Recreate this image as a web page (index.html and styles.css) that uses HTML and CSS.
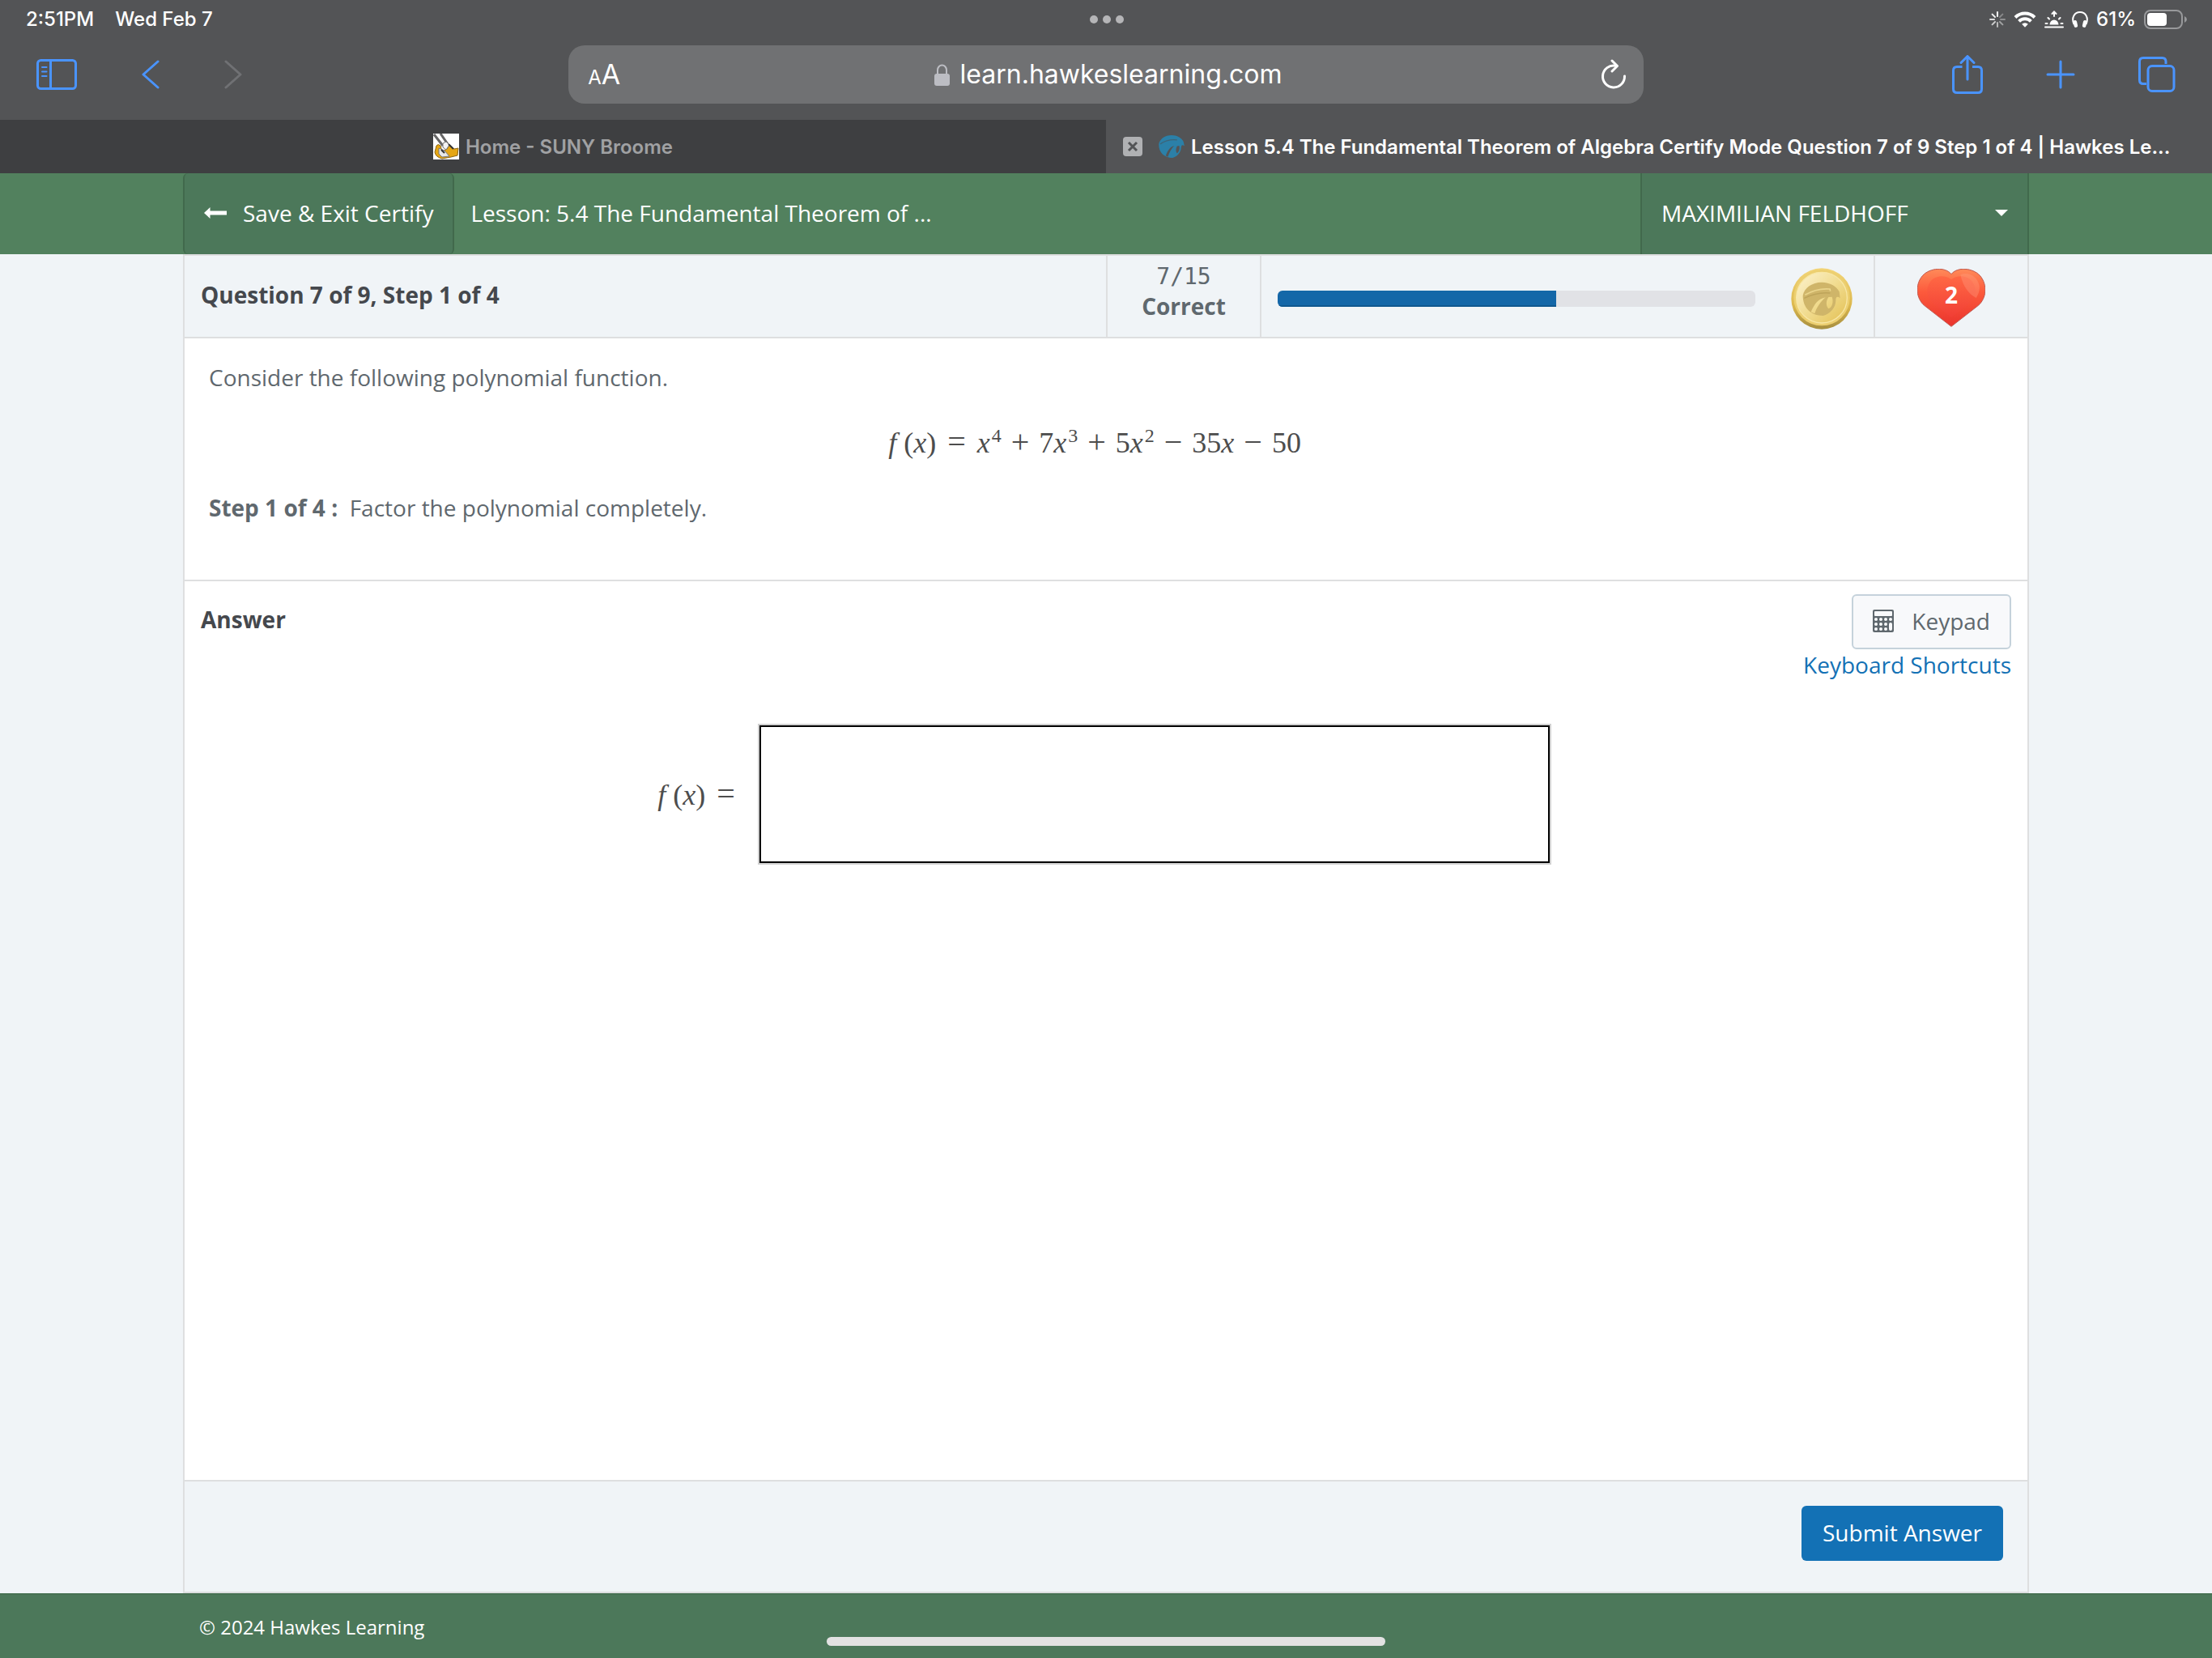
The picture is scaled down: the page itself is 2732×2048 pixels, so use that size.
FILE: index.html
```html
<!DOCTYPE html>
<html lang="en">
<head>
    <meta charset="UTF-8">
    <meta name="viewport" content="width=device-width, initial-scale=1.0">
    <title>Lesson 5.4 The Fundamental Theorem of Algebra</title>
    <link rel="stylesheet" href="styles.css">
</head>
<body>
    <div class="browser">
        <div class="status-bar">
            <div class="status-left">
                <span>2:51PM</span>
                <span>Wed Feb 7</span>
            </div>
            <svg class="dots" width="44" height="10" viewBox="0 0 44 10" fill="#b5b5b7">
                <circle cx="6" cy="5" r="5"/><circle cx="22" cy="5" r="5"/><circle cx="38" cy="5" r="5"/>
            </svg>
            <div class="status-right">
                <svg width="20" height="20" viewBox="0 0 20 20" stroke="#fff" stroke-width="2" stroke-linecap="round">
                    <path d="M10 1v5"/>
                    <path d="M16.4 3.6l-3.4 3.4" opacity=".3"/>
                    <path d="M19 10h-5" opacity=".35"/>
                    <path d="M16.4 16.4L13 13" opacity=".45"/>
                    <path d="M10 19v-5" opacity=".6"/>
                    <path d="M3.6 16.4L7 13" opacity=".7"/>
                    <path d="M1 10h5" opacity=".8"/>
                    <path d="M3.6 3.6L7 7" opacity=".9"/>
                </svg>
                <svg width="28" height="20" viewBox="0 0 28 20" fill="none" stroke="#fff" stroke-width="4">
                    <path d="M2 7.5a17 17 0 0 1 24 0"/>
                    <path d="M6.6 12.3a10.5 10.5 0 0 1 14.8 0"/>
                    <path d="M14 19.8l-3.8-4a5.4 5.4 0 0 1 7.6 0z" fill="#fff" stroke="none"/>
                </svg>
                <svg width="24" height="22" viewBox="0 0 24 22" fill="none" stroke="#fff" stroke-width="2" stroke-linecap="round">
                    <path d="M1 20.5h22M12 7V2M9.5 4L12 1.500 14.500 4M1.500 16h2M20.500 16h2M4.500 9l1.500 1.500M19.500 9L18 10.500"/>
                    <path d="M6.500 17.500a5.500 6 0 0 1 11 0z" fill="#fff" stroke="none"/>
                </svg>
                <svg width="20" height="20" viewBox="0 0 20 20" fill="none" stroke="#fff" stroke-width="2">
                    <path d="M2.500 16C-1 8 3 1 10 1s11 7 7.500 15"/>
                    <rect x="2" y="11" width="4.500" height="9" rx="2.200" fill="#fff" stroke="none" transform="rotate(-12 4 15)"/>
                    <rect x="13.500" y="11" width="4.500" height="9" rx="2.200" fill="#fff" stroke="none" transform="rotate(12 16 15)"/>
                </svg>
                <span>61%</span>
                <svg width="54" height="24" viewBox="0 0 54 24">
                    <rect x="1" y="1" width="46" height="22" rx="7" fill="none" stroke="#98999b" stroke-width="2"/>
                    <rect x="4" y="4" width="24" height="16" rx="4" fill="#fff"/>
                    <path d="M50 8q3 1.500 3 4t-3 4z" fill="#98999b"/>
                </svg>
            </div>
        </div>

        <div class="toolbar">
            <div class="tools-left">
                <button type="button" aria-label="Show sidebar">
                    <svg width="50" height="38" viewBox="0 0 50 38" fill="none" stroke="#4a94ff" stroke-width="3">
                        <rect x="1.500" y="1.500" width="47" height="35" rx="4"/>
                        <path d="M17.500 2v34"/>
                        <path d="M7 10h5.500M7 15.500h5.500M7 21h5.500" stroke-width="2" stroke-linecap="round"/>
                    </svg>
                </button>
                <button type="button" aria-label="Back">
                    <svg width="22" height="38" viewBox="0 0 22 38" fill="none" stroke="#4a94ff" stroke-width="3" stroke-linecap="round" stroke-linejoin="round">
                        <path d="M20 3L2 19l18 16"/>
                    </svg>
                </button>
                <button type="button" aria-label="Forward" disabled>
                    <svg width="22" height="38" viewBox="0 0 22 38" fill="none" stroke="#707174" stroke-width="3" stroke-linecap="round" stroke-linejoin="round">
                        <path d="M2 3l18 16L2 35"/>
                    </svg>
                </button>
            </div>
            <div class="address">
                <button type="button" class="text-size" aria-label="Page settings"><small>A</small>A</button>
                <div class="url">
                    <svg width="19" height="27" viewBox="0 0 19 27">
                        <path d="M4 13V7.500a5.500 6 0 0 1 11 0V13" fill="none" stroke="#bcbdc3" stroke-width="2"/>
                        <rect x="0" y="12" width="19" height="15" rx="3" fill="#bcbdc3"/>
                    </svg>
                    <input type="text" value="learn.hawkeslearning.com" aria-label="Address">
                </div>
                <button type="button" aria-label="Reload">
                    <svg width="32" height="38" viewBox="0 0 32 38" fill="none" stroke="#fff" stroke-width="3" stroke-linecap="round" stroke-linejoin="round">
                        <path d="M18.500 8.200A13.500 13.500 0 1 0 29.500 21"/>
                        <path d="M14 2l6.500 6.500L14 15"/>
                    </svg>
                </button>
            </div>
            <div class="tools-right">
                <button type="button" aria-label="Share">
                    <svg width="38" height="48" viewBox="0 0 38 48" fill="none" stroke="#4a94ff" stroke-width="3" stroke-linecap="round" stroke-linejoin="round">
                        <path d="M12.500 14.500H6q-4.500 0-4.500 4.500v23q0 4.500 4.500 4.500h26q4.500 0 4.500-4.500V19q0-4.500-4.500-4.500h-7" stroke-linecap="butt"/>
                        <path d="M19 30V2M11 9.500L19 1.500l8 8"/>
                    </svg>
                </button>
                <button type="button" aria-label="New tab">
                    <svg width="36" height="36" viewBox="0 0 36 36" stroke="#4a94ff" stroke-width="3" stroke-linecap="round">
                        <path d="M18 2v32M2 18h32"/>
                    </svg>
                </button>
                <button type="button" aria-label="Show tabs">
                    <svg width="46" height="44" viewBox="0 0 46 44" fill="none" stroke="#4a94ff" stroke-width="3">
                        <rect x="12" y="11.500" width="32" height="31" rx="5"/>
                        <path d="M34 9V6q0-4.500-4.500-4.500H6Q1.500 1.500 1.500 6v23q0 4.500 4.500 4.500h4"/>
                    </svg>
                </button>
            </div>
        </div>

        <div class="tabs">
            <div class="tab">
                <svg width="32" height="32" viewBox="0 0 32 32">
                    <rect width="32" height="32" fill="#fff"/>
                    <path d="M1 1l11 14M9 0l9 13" fill="none" stroke="#666" stroke-width="3"/>
                    <path d="M4 15q2-3 5 0l2 7 6-3 3-5 6 5 5-1-1 9-8 2-11 2q-8-2-9-8z" fill="#e5a614" stroke="#8a6414"/>
                    <path d="M7 18l7 3 6 7-9 1-4-4z" fill="#e8e8e8" stroke="#777"/>
                    <path d="M12 12l4-2 4 4-4 6-4-3z" fill="#f4f4f4" stroke="#777"/>
                    <path d="M10 20l4 4M19 13l6 6" fill="none" stroke="#333" stroke-width="2"/>
                </svg>
                <span>Home - SUNY Broome</span>
            </div>
            <div class="tab active">
                <button type="button" class="close" aria-label="Close tab">
                    <svg width="24" height="24" viewBox="0 0 24 24">
                        <rect width="24" height="24" rx="4" fill="#b0b1b3"/>
                        <path d="M7 7l10 10M17 7L7 17" stroke="#535456" stroke-width="3"/>
                    </svg>
                </button>
                <svg class="hawk" width="32" height="28" viewBox="0 0 140 124">
                    <path fill="#2b80a8" fill-rule="evenodd" d="M0 50C5 20 35 0 70 0c30 0 55 15 65 35l5 24c-12-9-16-4-18 9 0 27-22 50-47 56C30 124 0 95 0 50zM38 112l12 6c8-25 20-45 34-60-22 6-35 26-46 54zM100 60c-8 15-8 30 0 40 12-11 16-26 12-42z"/>
                    <path d="M8 48Q50 20 100 26" fill="none" stroke="#3d6478" stroke-width="6"/>
                </svg>
                <span>Lesson 5.4 The Fundamental Theorem of Algebra Certify Mode Question 7 of 9 Step 1 of 4 | Hawkes Le...</span>
            </div>
        </div>
    </div>

    <header class="header">
        <div class="container header-inner">
            <a href="#" class="exit">
                <svg width="28" height="16" viewBox="0 0 28 16" fill="#fff"><path d="M0 8l7.500-7v4.500H28v5H7.500V15z"/></svg>
                Save &amp; Exit Certify
            </a>
            <span class="lesson">Lesson: 5.4 The Fundamental Theorem of ...</span>
            <button type="button" class="user" aria-haspopup="menu">
                MAXIMILIAN FELDHOFF
                <svg width="16" height="8" viewBox="0 0 16 8" fill="#fff"><path d="M0 0h16L8 8z"/></svg>
            </button>
        </div>
    </header>

    <main class="container main">
        <div class="info">
            <h1>Question 7 of 9, Step 1 of 4</h1>
            <div class="score">
                <span class="count">7/15</span>
                <strong>Correct</strong>
            </div>
            <div class="mastery">
                <progress max="12" value="7" aria-label="Mastery progress"></progress>
                <svg width="76" height="76" viewBox="0 0 228 228">
                    <defs>
                        <linearGradient id="rim" x1="0" y1="0" x2="0" y2="1">
                            <stop offset="0" stop-color="#f3d578"/>
                            <stop offset=".6" stop-color="#ddb94f"/>
                            <stop offset="1" stop-color="#a68e3f"/>
                        </linearGradient>
                        <linearGradient id="face" x1="0" y1="0" x2="1" y2="1">
                            <stop offset="0" stop-color="#fdf3d0"/>
                            <stop offset=".5" stop-color="#f1dc90"/>
                            <stop offset="1" stop-color="#e3c052"/>
                        </linearGradient>
                    </defs>
                    <circle cx="114" cy="114" r="113" fill="url(#rim)"/>
                    <circle cx="114" cy="110" r="104" fill="#eccf70"/>
                    <circle cx="114" cy="110" r="94" fill="url(#face)" stroke="#f8e7a6" stroke-width="4"/>
                    <path transform="translate(44 53)" fill="#cfb569" fill-rule="evenodd" d="M0 50C5 20 35 0 70 0c30 0 55 15 65 35l3 24c-12-9-16-4-16 9 0 27-22 50-47 56C30 124 0 95 0 50zM30 110l14 6c8-25 22-44 40-60-28 6-41 25-54 54zM95 55c-10 15-10 32 0 43 15-6 19-26 13-44z"/>
                    <path d="M52 100q44-26 92-22l2 8" fill="none" stroke="#ead58c" stroke-width="5"/>
                    <path d="M49 112q48-24 96-19" fill="none" stroke="#bea45a" stroke-width="4"/>
                </svg>
            </div>
            <div class="lives">
                <svg width="84" height="72" viewBox="0 0 252 216">
                    <defs>
                        <linearGradient id="heart" x1="0" y1="0" x2="0" y2="1">
                            <stop offset="0" stop-color="#ff8a59"/>
                            <stop offset=".4" stop-color="#fc5a3c"/>
                            <stop offset="1" stop-color="#ea332d"/>
                        </linearGradient>
                        <linearGradient id="heart-in" x1="0" y1="0" x2="0" y2="1">
                            <stop offset="0" stop-color="#ff6844"/>
                            <stop offset="1" stop-color="#f13e35"/>
                        </linearGradient>
                    </defs>
                    <path d="M126 20C148-8 205-4 232 25c30 35 24 85-6 111l-100 78L26 136C-4 110-10 60 20 25 47-4 104-8 126 20z" fill="url(#heart)" stroke="#c05a50" stroke-width="3"/>
                    <path d="M126 40c22-18 60-16 78 8 18 26 14 56-6 76l-72 56-72-56c-20-20-24-50-6-76 18-24 56-26 78-8z" fill="url(#heart-in)"/>
                    <path d="M160 22c30-12 62 6 70 40 2 18-4 34-12 46-26-12-50-44-58-86z" fill="#ffa183" opacity=".35"/>
                </svg>
                <span>2</span>
            </div>
        </div>

        <section class="question">
            <p>Consider the following polynomial function.</p>
            <p class="formula">
                <span><i>f</i> (<i>x</i>)</span>
                <span class="op equals">=</span>
                <span><i>x</i><sup>4</sup></span>
                <span class="op">+</span>
                <span>7<i>x</i><sup>3</sup></span>
                <span class="op">+</span>
                <span>5<i>x</i><sup>2</sup></span>
                <span class="op">−</span>
                <span>35<i>x</i></span>
                <span class="op">−</span>
                <span>50</span>
            </p>
            <p><strong>Step 1 of 4 :</strong>&nbsp; Factor the polynomial completely.</p>
        </section>

        <form id="answerForm" class="answer">
            <div class="answer-head">
                <h2>Answer</h2>
                <div class="helpers">
                    <button type="button" class="keypad">
                        <svg width="26" height="28" viewBox="0 0 26 28">
                            <rect width="26" height="28" rx="2" fill="#5f686e"/>
                            <g fill="#f8f9fb">
                                <rect x="2" y="2" width="22" height="6" rx="1"/>
                                <circle cx="4" cy="12" r="2"/><circle cx="10" cy="12" r="2"/><circle cx="16" cy="12" r="2"/><circle cx="22" cy="12" r="2"/>
                                <circle cx="4" cy="18" r="2"/><circle cx="10" cy="18" r="2"/><circle cx="16" cy="18" r="2"/>
                                <circle cx="4" cy="24" r="2"/><circle cx="10" cy="24" r="2"/><circle cx="16" cy="24" r="2"/>
                                <rect x="20" y="16" width="4" height="10" rx="2"/>
                            </g>
                        </svg>
                        Keypad
                    </button>
                    <a href="#">Keyboard Shortcuts</a>
                </div>
            </div>
            <div class="answer-row">
                <label for="answer" class="formula">
                    <span><i>f</i> (<i>x</i>)</span>
                    <span class="op equals">=</span>
                </label>
                <input type="text" id="answer" name="answer">
            </div>
        </form>

        <div class="actions">
            <button type="submit" form="answerForm" class="submit">Submit Answer</button>
        </div>
    </main>

    <footer class="footer">
        <div class="container">© 2024 Hawkes Learning</div>
        <div class="home-indicator"></div>
    </footer>
</body>
</html>
```

FILE: styles.css
```css
* {
    box-sizing: border-box;
}
body {
    margin: 0;
    min-height: 100vh;
    display: flex;
    flex-direction: column;
    background-color: #f0f4f7;
    color: #5f686e;
    font-family: "Open Sans", sans-serif;
    font-size: 28px;
    line-height: 36px;
}
h1, h2, p {
    margin: 0;
    font-size: 28px;
}
button, input {
    font: inherit;
    color: inherit;
}
button {
    padding: 0;
    border: none;
    background: none;
    cursor: pointer;
}
a {
    text-decoration: none;
}
svg {
    display: block;
    flex: none;
}

/* browser chrome */
.browser {
    background-color: #535456;
    color: #fff;
    font-family: Inter, sans-serif;
}
.status-bar {
    display: grid;
    grid-template-columns: 1fr auto 1fr;
    align-items: center;
    height: 48px;
    padding: 0 30px 0 32px;
    font-size: 24px;
    font-weight: 500;
}
.status-left {
    display: flex;
    gap: 26px;
}
.status-right {
    display: flex;
    justify-content: flex-end;
    align-items: center;
    gap: 10px;
}
.toolbar {
    display: grid;
    grid-template-columns: 1fr 48.6% 1fr;
    height: 100px;
    padding: 8px 0 20px;
}
.tools-left, .tools-right {
    display: flex;
    align-items: center;
    padding: 0 45px;
    gap: 78px;
}
.tools-left {
    gap: 80px;
}
.tools-right {
    justify-content: flex-end;
}
.address {
    display: flex;
    align-items: center;
    justify-content: space-between;
    padding: 0 21px 0 24px;
    border-radius: 20px;
    background-color: #707173;
}
.text-size {
    padding-top: 4px;
    font-size: 34px;
}
.text-size small {
    font-size: 24px;
}
.url {
    display: flex;
    align-items: center;
    gap: 13px;
}
.url input {
    width: 404px;
    padding: 0;
    border: none;
    background: none;
    font-size: 32px;
}
.tabs {
    display: grid;
    grid-template-columns: 1fr 1fr;
    height: 66px;
    font-size: 24px;
    font-weight: 600;
}
.tab {
    display: flex;
    align-items: center;
    justify-content: center;
    gap: 8px;
    background-color: #3e3f41;
    color: #a0a1a3;
    white-space: nowrap;
    overflow: hidden;
}
.tab span {
    padding-top: 2px;
}
.tab.active {
    justify-content: flex-start;
    padding: 0 21px;
    background-color: #535456;
    color: #fff;
}
.close {
    margin-right: 12px;
}

/* page header */
.container {
    width: 100%;
    max-width: 2280px;
    margin: 0 auto;
}
.header {
    background-color: #52815e;
    color: #fff;
}
.header-inner {
    display: flex;
    height: 100px;
}
.exit {
    display: flex;
    align-items: center;
    gap: 20px;
    padding: 0 24px 2px;
    border: solid #41694c;
    border-width: 0 2px;
    border-radius: 6px;
    background-color: #4c785a;
    color: #fff;
}
.lesson {
    flex: 1;
    align-self: center;
    padding: 0 0 2px 20px;
}
.user {
    display: flex;
    align-items: center;
    justify-content: space-between;
    width: 480px;
    padding: 0 24px 2px;
    border: solid #41694c;
    border-width: 0 2px;
    background-color: #4c785a;
}

/* question */
.main {
    flex: 1;
    display: flex;
    flex-direction: column;
    border: 2px solid #dedfe0;
    background-color: #fff;
}
.info {
    display: flex;
    height: 102px;
    border-bottom: 2px solid #dedfe0;
    background-color: #f0f4f7;
}
.info h1 {
    flex: 1;
    align-self: center;
    padding: 0 0 4px 20px;
    color: #45484d;
}
.score {
    width: 192px;
    padding-top: 8px;
    border: solid #dedfe0;
    border-width: 0 2px;
    text-align: center;
}
.score span, .score strong {
    display: block;
}
.count {
    font-family: "DejaVu Sans Mono", monospace;
}
.mastery {
    display: flex;
    align-items: center;
    gap: 44px;
    width: 758px;
    padding: 6px 26px 0 20px;
    border-right: 2px solid #dedfe0;
}
progress {
    flex: 1;
    height: 20px;
    border: none;
    border-radius: 6px;
    overflow: hidden;
    appearance: none;
}
progress::-webkit-progress-bar {
    background-color: #e1e2e6;
}
progress::-webkit-progress-value {
    background-color: #1467a8;
    border-bottom: 2px solid #10588f;
}
.lives {
    display: grid;
    place-items: center;
    width: 188px;
    padding-top: 4px;
    color: #fff;
    font-weight: bold;
}
.lives > * {
    grid-area: 1 / 1;
}
.lives span {
    padding-bottom: 8px;
}
.question {
    height: 300px;
    padding: 30px;
    border-bottom: 2px solid #dedfe0;
}
.formula {
    display: flex;
    justify-content: center;
    align-items: baseline;
    color: #4d4d4d;
    font-family: "Liberation Serif", serif;
    font-size: 36px;
}
.question .formula {
    padding: 44px 28px 44px 0;
}
.formula sup {
    margin-left: 2px;
    font-size: 24px;
    line-height: 0;
}
.op {
    margin: 0 12px;
    font-size: 40px;
}
.equals {
    margin: 0 14px;
}

/* answer */
.answer {
    flex: 1;
    padding: 16px 20px 0;
}
.answer-head {
    display: flex;
    justify-content: space-between;
    line-height: 38px;
}
.answer-head h2 {
    padding-top: 12px;
    color: #45484d;
}
.helpers {
    display: flex;
    flex-direction: column;
    align-items: flex-end;
}
.helpers a {
    color: #1371b5;
}
.keypad {
    display: flex;
    align-items: center;
    gap: 22px;
    height: 68px;
    padding: 0 24px 2px;
    border: 2px solid #c5d2db;
    border-radius: 6px;
    background-color: #f8f9fb;
}
.answer-row {
    display: flex;
    justify-content: center;
    align-items: center;
    gap: 16px;
    padding: 56px 6px 0 0;
}
.answer-row input {
    width: 976px;
    height: 170px;
    padding: 0 20px;
    border: 2px solid #000;
    outline: 2px solid #d0d0d0;
    outline-offset: 0;
    background-color: #fff;
}
.actions {
    display: flex;
    justify-content: flex-end;
    height: 138px;
    padding: 30px;
    border-top: 2px solid #dedfe0;
    background-color: #f0f4f7;
}
.submit {
    height: 68px;
    padding: 0 26px 2px;
    border-radius: 6px;
    background-color: #1371b5;
    color: #fff;
}
.submit:hover {
    background-color: #10588f;
}

/* footer */
.footer {
    position: relative;
    height: 80px;
    padding-top: 22px;
    border-top: 2px solid #477153;
    background-color: #4c785a;
    color: #fff;
    font-size: 24px;
}
.footer .container {
    padding-left: 20px;
}
.home-indicator {
    position: absolute;
    left: 50%;
    bottom: 15px;
    width: 690px;
    height: 11px;
    margin-left: -345px;
    border-radius: 6px;
    background-color: #e2e2e2;
}
```
